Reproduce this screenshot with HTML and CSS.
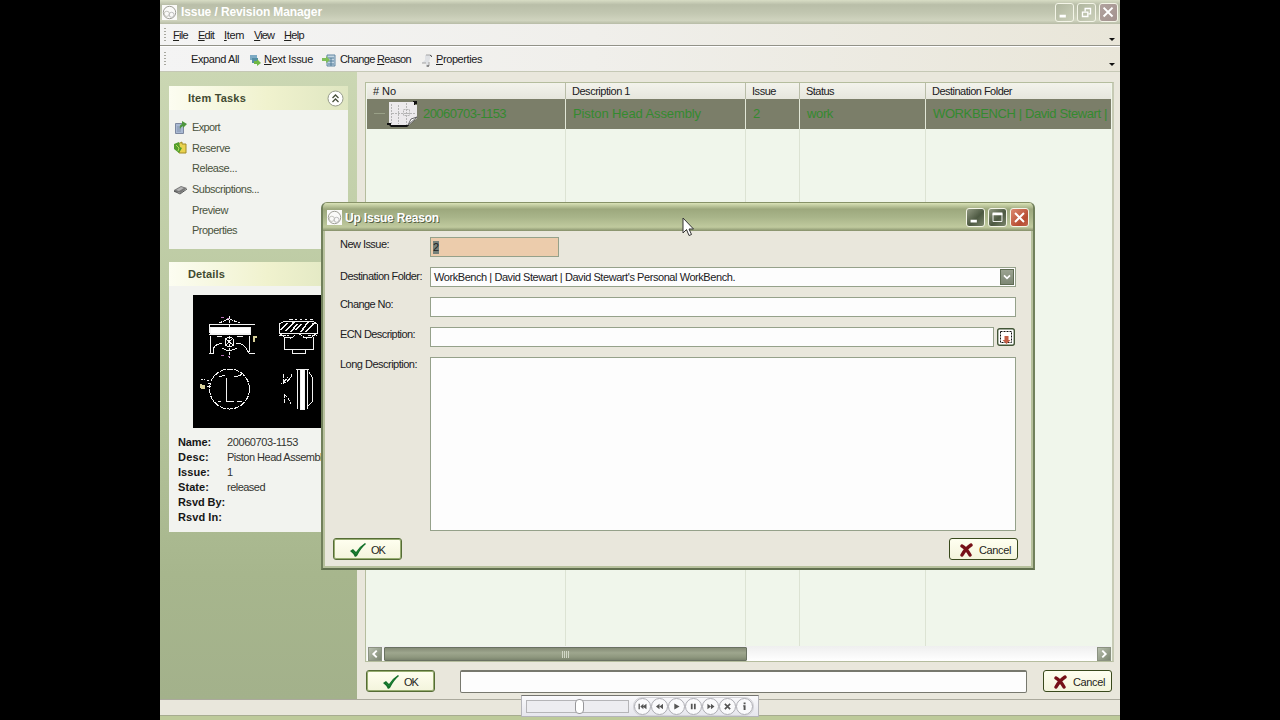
FILE: index.html
```html
<!DOCTYPE html>
<html lang="en">
<head>
<meta charset="utf-8">
<title>Issue / Revision Manager</title>
<link rel="stylesheet" href="styles.css">
</head>
<body>
<svg class="defs" aria-hidden="true">
  <symbol id="app" viewBox="0 0 15 15"><rect width="15" height="15" fill="#fafaf8"/><g fill="none" stroke="#a0a098"><circle cx="7.5" cy="7.5" r="6.2"/><circle cx="4.8" cy="8.8" r="2.6" stroke="#c5c5be"/><circle cx="9.6" cy="9.8" r="2.5" stroke="#bbb"/></g></symbol>
  <symbol id="check" viewBox="0 0 16 14"><path d="M0 8 3 6 6 9Q10 3 15 0L16 1Q11 5 7 13L5 14Q3 10 0 8Z" fill="#13702a"/><path d="M3 8 6 11 11 4" fill="none" stroke="#1d8434"/></symbol>
  <symbol id="cross" viewBox="0 0 13 14"><path d="M2 3Q6 5 10 12M11 2Q6 5 2 12" fill="none" stroke="#761018" stroke-width="3.4" stroke-linecap="round"/></symbol>
</svg>
<div class="window">
  <header class="titlebar">
    <svg class="app"><use href="#app"/></svg>
    <span class="title" data-w="141">Issue / Revision Manager</span>
    <span class="winbtns faded">
      <svg class="wb" viewBox="0 0 19 19"><path d="M4 12h7v3H4z" fill="#fff"/></svg>
      <svg class="wb" viewBox="0 0 19 19"><path d="M8 8V5h6v6h-2M5 9h6v5H5z" fill="none" stroke="#fff" stroke-width="1.5"/></svg>
      <svg class="wb close" viewBox="0 0 19 19"><path d="M4 4l10 10M14 4l-10 10" stroke="#fff" stroke-width="2.2"/></svg>
    </span>
  </header>
  <nav class="bar menubar">
    <i class="grip"></i>
    <span data-w="15"><u>F</u>ile</span><span data-w="16"><u>E</u>dit</span><span data-w="20"><u>I</u>tem</span><span data-w="20"><u>V</u>iew</span><span data-w="20"><u>H</u>elp</span>
    <i class="more"></i>
  </nav>
  <nav class="bar toolbar">
    <i class="grip"></i>
    <span class="expand" data-w="48">Expand All</span>
    <svg class="ti next" viewBox="0 0 12 12"><path d="M1 1h7v5H1z" fill="#7dabc4"/><path d="M3 4h6v5H3z" fill="#558fa6"/><path d="M5 7h3V5l4 4-4 3v-2H5z" fill="#6fb844"/></svg>
    <span data-w="49"><u>N</u>ext Issue</span>
    <svg class="ti change" viewBox="0 0 14 13"><path d="M5 1h8v11H5z" fill="#c4d6e3" stroke="#6287a2"/><path d="M6 4h6M6 7h6M6 10h6M9 4v8" stroke="#557e9a"/><path d="M0 4h4V2l4 4-4 3V7H0z" fill="#80bf59"/></svg>
    <span data-w="71">Change <u>R</u>eason</span>
    <svg class="ti props" viewBox="0 0 12 13"><path d="M4 1h6L8 8v4H5V9H1l3-3z" fill="#dfe1e4"/><path d="M5 1h4l2 1M8 8v4H5M1 9h4" fill="none" stroke="#a3a3a3"/><path d="M9 1l2 2M6 12h2" stroke="#555"/></svg>
    <span data-w="46"><u>P</u>roperties</span>
    <i class="more"></i>
  </nav>
  <div class="body">
    <aside class="side">
      <section class="panel tasks">
        <h2><span data-w="58">Item Tasks</span>
          <svg class="chev" viewBox="0 0 17 17"><circle cx="8.5" cy="8.5" r="7.5" fill="#fff" stroke="#969b8b"/><path d="M5.5 8l3-3 3 3M5.5 12l3-3 3 3" fill="none" stroke="#47503c" stroke-width="1.3"/></svg>
        </h2>
        <ul>
          <li><svg viewBox="0 0 13 13"><path d="M1.500 2.500h8v10h-8z" fill="#a9b9d2" stroke="#7d88a0"/><path d="M3 6h4M3 8h4M3 10h4" stroke="#8292ad"/><path d="M6 8Q5 4 8 3V0l5 3-4 4V5Q7 6 6 8z" fill="#4d963e"/></svg><span data-w="28">Export</span></li>
          <li><svg viewBox="0 0 13 13"><path d="M4 3l4-2v2h4v9H5z" fill="#e9d24f" stroke="#a28b25"/><path d="M0 3l5-2 1 5 2 1-3 5-5-4z" fill="#539e2d"/><path d="M2 4l3 3-1 3" stroke="#b5dc58" fill="none"/></svg><span data-w="38">Reserve</span></li>
          <li><span data-w="45">Release...</span></li>
          <li><svg viewBox="0 0 13 13"><path d="M0 7l7-4 6 2-6 5-7-1z" fill="#777"/><path d="M2 7l5-3 3 1-5 3z" fill="#b7b7b7"/><path d="M0 8l6 3 7-5" fill="none" stroke="#555"/></svg><span data-w="67">Subscriptions...</span></li>
          <li><span data-w="36">Preview</span></li>
          <li><span data-w="45">Properties</span></li>
        </ul>
      </section>
      <section class="panel details">
        <h2><span data-w="37">Details</span></h2>
        <svg class="preview" viewBox="0 0 135 133">
          <g fill="none" stroke="#f2f2f2">
            <path d="M16.5 29.5H62M16.5 29V38M17.500 41V58M56.5 41V57M16 58H20V54Q23 48 29 49M62 58H56L53 53Q48 47 43 49M16 39.5H58M24 41h5M44 41h6"/>
            <path d="M36.5 21V63M26 28L36 24 47 28" stroke-dasharray="3 1"/>
            <circle cx="36.500" cy="47" r="4.500"/><path d="M32 51l8-8M32 43l9 8M29 53Q36 58 44 53"/>
            <path d="M17 32H57V38H17z" fill="#fff"/>
            <path d="M86 37V29L92 26H120L124 29V38H86zM86 38L91 42H100M124 38L119 42H110M91.500 42V54H120V42M99 54V58H112V54M96 24h4m2 0h2m3 0h2m3 0h2m3 0h3"/>
            <path d="M88 35l6-7M93 36l8-9M98 37l6-8M108 37l7-10M113 37l8-9M103 35l5-6" stroke-width="1.600"/>
            <path d="M97 44L105 38 114 44M86 40H96M115 40H124" stroke-dasharray="3 1"/>
            <circle cx="36.500" cy="94" r="20" stroke-dasharray="6 1"/>
            <path d="M33.500 83V106H41M25 106h3m16 0h5M26 82l6-2M41 82q6-1 8-3"/><path d="M8 84h4m2 1h3m-2 3h3m-4 3h4" stroke-dasharray="2 1"/>
            <path d="M90 79V88L95 82M99 79Q97 87 88 89M91 99V109M91 100Q95 101 98 109" stroke-dasharray="4 1"/>
            <path d="M104.500 74V114M114.500 74V114M103 74.500H116M116 77L119 82V107L115 111"/>
            <path d="M107 74H111V114H107z" fill="#fff"/>
          </g>
          <path d="M28 22h3m3 1h2M28 60h3m4 1h2" stroke="#b56db5"/><path d="M61 41v6M64 42h-3M7 91h5m-4 2h4M8 89v4" stroke="#d8d19a" stroke-width="2"/>
        </svg>
        <dl>
          <dt data-w="33">Name:</dt><dd><span data-w="71">20060703-1153</span></dd>
          <dt data-w="31">Desc:</dt><dd><span data-w="100">Piston Head Assembly</span></dd>
          <dt data-w="32">Issue:</dt><dd>1</dd>
          <dt data-w="31">State:</dt><dd><span data-w="38">released</span></dd>
          <dt data-w="47">Rsvd By:</dt><dd></dd>
          <dt data-w="44">Rsvd In:</dt><dd></dd>
        </dl>
      </section>
    </aside>
    <main class="main">
      <div class="grid">
        <div class="cols head">
          <div><span data-w="23"># No</span></div><div><span data-w="58">Description 1</span></div><div><span data-w="24">Issue</span></div><div><span data-w="28">Status</span></div><div><span data-w="80">Destination Folder</span></div>
        </div>
        <div class="cols row">
          <div><svg class="sheet" viewBox="0 0 46 28"><path d="M0 13.500h11" stroke="#99a087"/><path d="M39 1h4v3h-2v16l-8 7H17l-2-2h-2v-2h3V3h23z" fill="#111"/><path d="M15 2H40V5H43V18L35 25H17V23H15z" fill="#eceaec"/><path d="M17.500 4v20M24.500 5v19M32.500 3v22M18 13.500h24M29.500 9.500h6v6h-6z" fill="none" stroke="#b5b5b5" stroke-dasharray="2 1"/><path d="M34 25l3-6 6-2z" fill="#fff" stroke="#666"/></svg><span data-w="83">20060703-1153</span></div><div><span data-w="128">Piston Head Assembly</span></div><div><span>2</span></div><div><span data-w="26">work</span></div><div><span data-w="174">WORKBENCH | David Stewart |</span></div>
        </div>
        <div class="cols fill"><div></div><div></div><div></div><div></div><div></div></div>
        <div class="scroll">
          <svg class="arrow" viewBox="0 0 14 14"><path d="M9 3L5 7l4 4" fill="none" stroke="#fff" stroke-width="2.200"/></svg>
          <div class="thumb"><i></i><i></i><i></i><i></i></div>
          <svg class="arrow" viewBox="0 0 14 14"><path d="M5 3L9 7 5 11" fill="none" stroke="#fff" stroke-width="2.200"/></svg>
        </div>
      </div>
      <div class="actions">
        <button class="btn ok"><svg><use href="#check"/></svg><span data-w="14">OK</span></button>
        <div class="message"></div>
        <button class="btn cancel"><svg><use href="#cross"/></svg><span data-w="32">Cancel</span></button>
      </div>
    </main>
  </div>
  <footer class="status"></footer>

  <div class="dialog">
    <header class="dtitle">
      <svg class="app"><use href="#app"/></svg>
      <span class="title" data-w="94">Up Issue Reason</span>
      <span class="winbtns">
        <svg class="wb" viewBox="0 0 19 19"><path d="M4 12h7v3H4z" fill="#fff"/></svg>
        <svg class="wb" viewBox="0 0 19 19"><path d="M4.500 5h10v9h-10z" fill="none" stroke="#fff"/><path d="M4 4h11v3H4z" fill="#fff"/></svg>
        <svg class="wb close" viewBox="0 0 19 19"><path d="M4.500 4.500l10 10M14.500 4.500l-10 10" stroke="#fff" stroke-width="2.200"/></svg>
      </span>
    </header>
    <form class="form">
      <label><span data-w="49">New Issue:</span></label><div class="field peach"><span class="sel">2</span></div>
      <label class="low"><span data-w="82">Destination Folder:</span></label><div class="field combo"><span data-w="301">WorkBench | David Stewart | David Stewart's Personal WorkBench.</span><svg viewBox="0 0 14 16"><path d="M3.500 6L7 9.500 10.500 6" fill="none" stroke="#fff" stroke-width="2"/></svg></div>
      <label><span data-w="53">Change No:</span></label><div class="field"></div>
      <label><span data-w="75">ECN Description:</span></label><div class="pair"><div class="field"></div><svg class="pick" viewBox="0 0 18 18"><rect x=".7" y=".7" width="16.600" height="16.600" rx="2" fill="#fff" stroke="#435637" stroke-width="1.400"/><path d="M3.500 3.500h11v11h-11z" fill="none" stroke="#111" stroke-dasharray="2 1"/><path d="M7.500 8h4v4h2l-4 4-4-4h2z" fill="#c25d45"/></svg></div>
      <label><span data-w="77">Long Description:</span></label><div class="field area"></div>
    </form>
    <div class="dactions">
      <button class="btn ok"><svg><use href="#check"/></svg><span data-w="14">OK</span></button>
      <button class="btn cancel"><svg><use href="#cross"/></svg><span data-w="32">Cancel</span></button>
    </div>
  </div>

  <div class="player">
    <div class="track"><i></i></div>
    <div class="keys">
      <svg viewBox="0 0 17 17"><path d="M4 5.500h1.500v6H4zM13 5.500v6L9.500 9v2.500L6 8.500l3.500-3V8z"/></svg>
      <svg viewBox="0 0 17 17"><path d="M8.500 5.500v6L4.500 8.500zM12.500 5.500v6L8.500 8.500z"/></svg>
      <svg viewBox="0 0 17 17"><path d="M6 5v7l6-3.500z"/></svg>
      <svg viewBox="0 0 17 17"><path d="M5.500 5.500h2v6h-2zM9 5.500h2v6H9z"/></svg>
      <svg viewBox="0 0 17 17"><path d="M5 5.500v6l4-3zM9 5.500v6l4-3z"/></svg>
      <svg viewBox="0 0 17 17"><path d="M5.500 5.500l6 6M11.500 5.500l-6 6" stroke="#555" stroke-width="1.900"/></svg>
      <svg viewBox="0 0 17 17"><path d="M7.500 4h2.200v2H7.500zM7 7h2.700v5.500H7.500V8.500H7z"/></svg>
    </div>
  </div>
  <svg class="cursor" viewBox="0 0 12 20"><path d="M1 1v15l3.500-3.500L7 18.500l2.500-1L7 12h4.500z" fill="#fff" stroke="#333"/></svg>
</div>
<script src="fit.js"></script>
</body>
</html>
```
FILE: styles.css
```css
* { box-sizing: border-box; }
body { margin: 0; background: #000; font: 11px/14px "Liberation Sans", Arial, sans-serif; color: #20201c; overflow: hidden; }
svg { display: block; flex: none; }
.defs { position: absolute; width: 0; height: 0; }
[data-w] { white-space: nowrap; }
u { text-underline-offset: 1px; text-decoration-thickness: 1px; }
.window { position: relative; width: 960px; height: 720px; margin: 0 auto; display: flex; flex-direction: column; background: #e9e7dc; }
.titlebar { height: 24px; display: flex; align-items: center; padding: 0 2px 0 2px; background: linear-gradient(#d8ddc5, #b9bea8 20%, #c2c7b1 55%, #d0d4bf 85%, #b7bca6); }
.app { width: 15px; height: 15px; }
.title { font-size: 12px; font-weight: bold; color: #fff; margin-left: 4px; }
.winbtns { display: flex; gap: 3px; margin-left: auto; }
.wb { width: 19px; height: 19px; border: 1px solid #f4f5e8; border-radius: 3px; background: linear-gradient(135deg, #919982, #4c5841 55%, #7c866c); }
.wb.close { background: linear-gradient(135deg, #dc8970, #b74c32 70%, #c2654b); }
.faded .wb { background: linear-gradient(135deg, #b0b69f, #cbd0ba); }
.faded .wb.close { background: linear-gradient(135deg, #b1a29f, #a3928e); }
.bar { display: flex; align-items: center; position: relative; padding-left: 4px; background: linear-gradient(90deg, #f4f4f4, #f0efeb 45%, #e9e6d9); }
.menubar { height: 22px; gap: 10px; border-bottom: 1px solid #929288; }
.menubar .grip { margin-right: -3px; }
.toolbar { height: 26px; border-top: 1px solid #fff; border-bottom: 1px solid #c5c8b5; }
.grip { width: 2px; height: 14px; background: repeating-linear-gradient(#a8a8a0 0 1px, transparent 1px 3px); }
.more { margin: 10px 5px 0 auto; border: 3px solid transparent; border-top-color: #111; border-bottom: 0; }
.expand { margin-left: 25px; }
.ti { width: 12px; height: 12px; margin: 2px 3px 0 10px; }
.ti.change { width: 14px; height: 13px; margin-right: 4px; margin-left: 9px; }
.ti.props { height: 13px; margin-left: 10px; }
.body { flex: 1; display: flex; min-height: 0; }
.side { width: 197px; padding: 14px 9px; background: linear-gradient(#cbd7b3, #b4c39a 55%, #a7b68d 80%, #a3b18b); }
.panel { background: #f2f3ef; }
.panel h2 { margin: 0; height: 24px; display: flex; align-items: center; padding: 0 4px 0 19px; font-size: 11px; font-weight: bold; color: #414a30; background: linear-gradient(90deg, #fcfdf1, #f0f2ce 55%, #dfe6c1); }
.chev { width: 17px; height: 17px; margin-left: auto; }
.tasks { height: 163px; margin-bottom: 13px; }
.tasks ul { margin: 0; padding: 7px 0 0 5px; list-style: none; color: #4b533e; }
.tasks li { height: 20.600px; display: flex; align-items: center; padding-left: 18px; }
.tasks li svg { width: 13px; height: 13px; margin: 0 5px 0 -18px; }
.details { height: 270px; overflow: hidden; }
.preview { width: 135px; height: 133px; margin: 9px 0 0 24px; background: #000; shape-rendering: crispEdges; }
.details dl { display: grid; grid-template-columns: 49px 1fr; grid-auto-rows: 15px; line-height: 15px; margin: 7px 0 0; padding-left: 9px; }
.details dt { font-weight: bold; width: max-content; color: #161616; }
.details dd { margin: 0; color: #33332f; }
.main { flex: 1; padding: 10px 6px 0 8px; display: flex; flex-direction: column; min-width: 0; }
.grid { height: 580px; border: 1px solid #b5bd9e; border-right: 2px solid #c6cab4; display: flex; flex-direction: column; background: #f0f6eb; padding: 0 1px 0 1px; }
.cols { display: grid; grid-template-columns: 199px 180px 54px 126px 1fr; }
.cols > div { padding-left: 7px; border-right: 1px solid #dce3d3; display: flex; align-items: center; overflow: hidden; white-space: nowrap; min-width: 0; }
.cols > div:last-child { border-right: 0; }
.head { height: 16px; background: linear-gradient(#f3f3ec, #e6e6dd); }
.head > div { border-right-color: #b9bda8; padding-left: 6px; }
.row { height: 30px; background: #7b7e69; color: #348a2f; font-size: 13px; }
.row > div { border-right-color: #e2e7d7; }
.sheet { width: 46px; height: 28px; margin-right: 3px; }
.fill { flex: 1; }
.scroll { height: 15px; display: flex; background: linear-gradient(#efefef, #fff); padding: 1px 0 0 1px; }
.arrow { width: 14px; height: 14px; border: 1px solid #8b9281; background: linear-gradient(135deg, #b8bfae, #7d8772); }
.thumb { width: 363px; height: 14px; margin: 0 auto 0 2px; display: flex; justify-content: center; align-items: center; gap: 1px; border: 1px solid #697161; border-radius: 1px; background: linear-gradient(#858c76, #9ea68e 40%, #8f987f 75%, #7b846e); }
.thumb i { width: 1px; height: 7px; background: #d1d6c6; }
.actions { display: flex; margin: 8px 2px 0 1px; }
.btn { display: flex; align-items: center; width: 69px; height: 22px; margin: 0; font: inherit; color: #252520; border: 1px solid #39491c; border-radius: 3px; background: linear-gradient(#fffff0, #f3f4dc); padding: 1px 0 0; }
.btn.ok { box-shadow: inset 0 0 0 1px #97ad71; padding-left: 16px; border-color: #556c35; }
.btn.ok svg { width: 16px; height: 14px; margin-right: 5px; }
.btn.cancel { padding-left: 10px; }
.btn.cancel svg { width: 13px; height: 14px; margin-right: 6px; }
.message { width: 567px; height: 23px; margin: 0 16px 0 25px; border: 1px solid #77786e; border-top-width: 2px; border-radius: 2px; background: #fdfdfd; }
.status { height: 21px; border-top: 1px solid #aaa99c; border-bottom: 4px solid #bdca9a; background: #e9e7dc; box-shadow: inset 0 -1px #a7ac90; }
.dialog { position: absolute; left: 161px; top: 202px; width: 714px; height: 368px; display: flex; flex-direction: column; border: 2px solid #71805b; border-top: 1px solid #879268; border-bottom-color: #61704e; border-radius: 6px 6px 0 0; background: #e9e7dc; box-shadow: inset 2px 0 #b7c19d, inset -2px 0 #b7c19d, inset 0 -2px #b7c19d; overflow: hidden; }
.dtitle { height: 28px; display: flex; align-items: center; padding: 1px 4px 0 4px; background: linear-gradient(#dae3b8, #9da87d 22%, #a8b489 50%, #c0ca9e 86%, #858f6a); flex: none; }
.dtitle .title { margin-left: 3px; text-shadow: 1px 1px #566044; }
.form { display: grid; grid-template-columns: 90px 586px; grid-template-rows: 20px 20px 20px 20px 173px; row-gap: 10px; padding: 6px 0 0 17px; margin: 0; }
.form label { line-height: 14px; }
.form .low { padding-top: 2px; }
.field { height: 20px; border: 1px solid #95a18a; background: #fdfdfd; }
.peach { width: 129px; background: #ecccac; padding: 2px; }
.sel { display: inline-block; background: #758079; color: #222; line-height: 13px; }
.combo { display: flex; align-items: center; padding: 0 1px 0 3px; }
.combo svg { margin-left: auto; width: 14px; height: 16px; border: 1px solid #5f6c53; background: linear-gradient(#9ba391, #7d8774); }
.pair { display: flex; justify-content: space-between; width: 586px; padding-right: 1px; }
.pair .field { width: 564px; }
.pick { width: 18px; height: 18px; margin-top: 1px; }
.area { height: 174px; }
.dactions { display: flex; justify-content: space-between; padding: 8px 15px 0 10px; }
.player { position: absolute; left: 361px; top: 695px; width: 238px; height: 22px; display: flex; align-items: center; border: 1px solid #b5b5ba; border-top-color: #74746f; background: linear-gradient(#fafafc, #e6e6ed); padding-left: 4px; }
.track { width: 103px; height: 13px; border: 1px solid #b5b5b8; background: #ededf1; padding-left: 48px; }
.track i { display: block; width: 9px; height: 15px; margin-top: -2px; border: 1px solid #97979a; border-radius: 4px; background: #fff; }
.keys { display: flex; margin-left: 4px; border-radius: 9px; border: 1px solid #d4d4d8; }
.keys svg { width: 17px; height: 17px; border: 1px solid #adadb3; border-radius: 50%; background: #fafafc; fill: #555; }
.cursor { position: absolute; left: 522px; top: 217px; width: 12px; height: 20px; }
```
FILE: fit.js
```js
// Tracks each label so that it fills its nominal width.
document.querySelectorAll('[data-w]').forEach(el => {
  const range = document.createRange();
  range.selectNodeContents(el);
  const natural = range.getBoundingClientRect().width;
  el.style.letterSpacing = (el.dataset.w - natural) / el.textContent.length + 'px';
});
```
